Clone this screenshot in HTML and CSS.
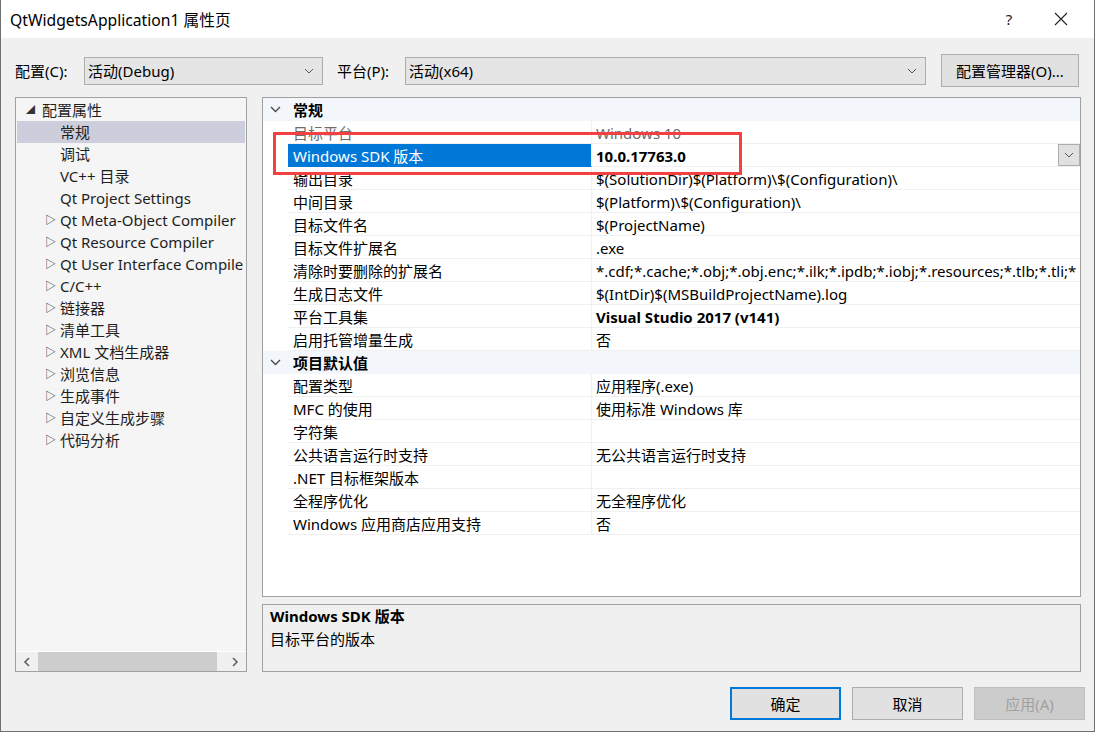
FILE: index.html
```html
<!DOCTYPE html>
<html lang="zh-CN">
<head>
  <meta charset="UTF-8" />
  <title>QtWidgetsApplication1 属性页</title>
  <link rel="stylesheet" href="styles.css">
</head>
<body>
  <div class="window">
    <div class="titlebar">
      <span class="title">QtWidgetsApplication1 属性页</span>
      <span class="tb-btn help">?</span>
      <span class="tb-btn close">
        <svg width="14" height="14" viewBox="0 0 14 14"><path d="M1 1L13 13M13 1L1 13" stroke="#222" stroke-width="1.1" fill="none"/></svg>
      </span>
    </div>

    <div class="toolbar">
      <span class="lbl">配置(C):</span>
      <div class="combo combo-config">
        <span>活动(Debug)</span>
        <svg class="chev" width="10" height="6" viewBox="0 0 10 6"><path d="M1 1L5 5L9 1" stroke="#555" fill="none"/></svg>
      </div>
      <span class="lbl lbl-platform">平台(P):</span>
      <div class="combo combo-platform">
        <span>活动(x64)</span>
        <svg class="chev" width="10" height="6" viewBox="0 0 10 6"><path d="M1 1L5 5L9 1" stroke="#555" fill="none"/></svg>
      </div>
      <button class="btn btn-manager">配置管理器(O)...</button>
    </div>

    <div class="main">
      <div class="tree">
        <div class="tree-list">
          <div class="node root"><span class="exp filled">◢</span>配置属性</div>
          <div class="node child selected">常规</div>
          <div class="node child">调试</div>
          <div class="node child">VC++ 目录</div>
          <div class="node child">Qt Project Settings</div>
          <div class="node child"><span class="exp">▷</span>Qt Meta-Object Compiler</div>
          <div class="node child"><span class="exp">▷</span>Qt Resource Compiler</div>
          <div class="node child"><span class="exp">▷</span>Qt User Interface Compile</div>
          <div class="node child"><span class="exp">▷</span>C/C++</div>
          <div class="node child"><span class="exp">▷</span>链接器</div>
          <div class="node child"><span class="exp">▷</span>清单工具</div>
          <div class="node child"><span class="exp">▷</span>XML 文档生成器</div>
          <div class="node child"><span class="exp">▷</span>浏览信息</div>
          <div class="node child"><span class="exp">▷</span>生成事件</div>
          <div class="node child"><span class="exp">▷</span>自定义生成步骤</div>
          <div class="node child"><span class="exp">▷</span>代码分析</div>
        </div>
        <div class="hscroll">
          <svg class="arrow" width="8" height="10" viewBox="0 0 8 10"><path d="M6 1L2 5L6 9" stroke="#606060" stroke-width="1.6" fill="none"/></svg>
          <div class="track"><div class="thumb"></div></div>
          <svg class="arrow" width="8" height="10" viewBox="0 0 8 10"><path d="M2 1L6 5L2 9" stroke="#606060" stroke-width="1.6" fill="none"/></svg>
        </div>
      </div>

      <div class="right">
        <div class="grid">
          <div class="row cat">
            <span class="gutter"><svg width="11" height="7" viewBox="0 0 11 7"><path d="M1 1L5.5 5.5L10 1" stroke="#444" stroke-width="1.3" fill="none"/></svg></span>
            <span class="name">常规</span>
          </div>
          <div class="row disabled"><span class="gutter"></span><span class="name">目标平台</span><span class="value">Windows 10</span></div>
          <div class="row selected"><span class="gutter"></span><span class="name">Windows SDK 版本</span><span class="value bold">10.0.17763.0</span>
            <span class="dd"><svg width="10" height="6" viewBox="0 0 10 6"><path d="M1 1L5 5L9 1" stroke="#555" fill="none"/></svg></span>
          </div>
          <div class="row"><span class="gutter"></span><span class="name">输出目录</span><span class="value">$(SolutionDir)$(Platform)\$(Configuration)\</span></div>
          <div class="row"><span class="gutter"></span><span class="name">中间目录</span><span class="value">$(Platform)\$(Configuration)\</span></div>
          <div class="row"><span class="gutter"></span><span class="name">目标文件名</span><span class="value">$(ProjectName)</span></div>
          <div class="row"><span class="gutter"></span><span class="name">目标文件扩展名</span><span class="value">.exe</span></div>
          <div class="row"><span class="gutter"></span><span class="name">清除时要删除的扩展名</span><span class="value">*.cdf;*.cache;*.obj;*.obj.enc;*.ilk;*.ipdb;*.iobj;*.resources;*.tlb;*.tli;*</span></div>
          <div class="row"><span class="gutter"></span><span class="name">生成日志文件</span><span class="value">$(IntDir)$(MSBuildProjectName).log</span></div>
          <div class="row"><span class="gutter"></span><span class="name">平台工具集</span><span class="value bold">Visual Studio 2017 (v141)</span></div>
          <div class="row"><span class="gutter"></span><span class="name">启用托管增量生成</span><span class="value">否</span></div>
          <div class="row cat">
            <span class="gutter"><svg width="11" height="7" viewBox="0 0 11 7"><path d="M1 1L5.5 5.5L10 1" stroke="#444" stroke-width="1.3" fill="none"/></svg></span>
            <span class="name">项目默认值</span>
          </div>
          <div class="row"><span class="gutter"></span><span class="name">配置类型</span><span class="value">应用程序(.exe)</span></div>
          <div class="row"><span class="gutter"></span><span class="name">MFC 的使用</span><span class="value">使用标准 Windows 库</span></div>
          <div class="row"><span class="gutter"></span><span class="name">字符集</span><span class="value"></span></div>
          <div class="row"><span class="gutter"></span><span class="name">公共语言运行时支持</span><span class="value">无公共语言运行时支持</span></div>
          <div class="row"><span class="gutter"></span><span class="name">.NET 目标框架版本</span><span class="value"></span></div>
          <div class="row"><span class="gutter"></span><span class="name">全程序优化</span><span class="value">无全程序优化</span></div>
          <div class="row"><span class="gutter"></span><span class="name">Windows 应用商店应用支持</span><span class="value">否</span></div>
          <div class="highlight"></div>
        </div>
        <div class="desc">
          <div class="desc-title">Windows SDK 版本</div>
          <div class="desc-text">目标平台的版本</div>
        </div>
      </div>
    </div>

    <div class="footer">
      <button class="btn btn-ok">确定</button>
      <button class="btn">取消</button>
      <button class="btn btn-disabled">应用(A)</button>
    </div>
  </div>
</body>
</html>
```

FILE: styles.css
```css
* {
  box-sizing: border-box;
}

body {
  margin: 0;
  font-family: "Segoe UI", "Noto Sans", "Noto Sans CJK SC", sans-serif;
  font-size: 15px;
  color: #000;
  background: #f0f0f0;
}

.window {
  width: 1095px;
  height: 732px;
  border: 1px solid #707070;
  border-top: none;
  background: #f0f0f0;
  display: flex;
  flex-direction: column;
  overflow: hidden;
}

.titlebar {
  height: 38px;
  background: #fff;
  display: flex;
  align-items: center;
  padding-left: 9px;
}

.title {
  font-size: 15.7px;
  flex: 1;
  padding-top: 1px;
}

.tb-btn {
  width: 58px;
  display: flex;
  justify-content: center;
  align-items: center;
}

.help {
  font-size: 15px;
  color: #222;
  width: 46px;
}

.close {
  width: 58px;
  margin-right: 4px;
}

.toolbar {
  display: flex;
  align-items: center;
  margin-top: 16px;
  height: 33px;
  padding-left: 14px;
}

.lbl {
  width: 69px;
}

.lbl-platform {
  margin-left: 14px;
  width: 68px;
}

.combo {
  height: 28px;
  background: #e5e5e5;
  border: 1px solid #adadad;
  display: flex;
  align-items: center;
  padding: 0 8px 0 3px;
  justify-content: space-between;
}

.combo-config {
  width: 239px;
}

.combo-platform {
  width: 521px;
}

.btn {
  font-family: inherit;
  font-size: 15px;
  background: #e1e1e1;
  border: 1px solid #adadad;
  color: #000;
  padding: 0;
}

.btn-manager {
  margin-left: 15px;
  width: 138px;
  height: 33px;
}

.main {
  display: flex;
  margin-top: 10px;
  padding-left: 14px;
  height: 576px;
}

.tree {
  width: 232px;
  height: 575px;
  background: #f5f5f5;
  border: 1px solid #a0a0a0;
  display: flex;
  flex-direction: column;
}

.tree-list {
  flex: 1;
  padding: 1px 1px 0;
  overflow: hidden;
}

.node {
  height: 22px;
  line-height: 22px;
  white-space: nowrap;
  position: relative;
  color: #1e1e1e;
}

.node.root {
  padding-left: 25px;
}

.node.child {
  padding-left: 43px;
}

.node.selected {
  background: #cccedb;
}

.exp {
  position: absolute;
  font-size: 10px;
  color: #333;
}

.root .exp {
  left: 9px;
  font-size: 9px;
  top: 0;
}

.child .exp {
  left: 28px;
  font-size: 11px;
  top: 0;
}

.hscroll {
  height: 20px;
  display: flex;
  align-items: center;
  background: #f0f0f0;
  border-top: 1px solid #fff;
}

.arrow {
  margin: 0 7px;
}

.track {
  flex: 1;
  height: 19px;
  padding-right: 2px;
}

.thumb {
  width: 179px;
  height: 100%;
  background: #cdcdcd;
}

.right {
  margin-left: 15px;
  width: 819px;
  display: flex;
  flex-direction: column;
  gap: 7px;
}

.grid {
  height: 500px;
  background: #fff;
  border: 1px solid #a0a0a0;
  position: relative;
  overflow: hidden;
}

.row {
  display: flex;
  height: 23px;
  align-items: stretch;
  position: relative;
  white-space: nowrap;
}

.gutter {
  width: 25px;
  flex: none;
  display: flex;
  align-items: center;
  justify-content: center;
}

.name {
  width: 304px;
  flex: none;
  padding-left: 5px;
  line-height: 24px;
  border-bottom: 1px solid #f0f0f0;
  border-right: 1px solid #f0f0f0;
  overflow: hidden;
}

.value {
  flex: 1;
  padding-left: 4px;
  line-height: 24px;
  border-bottom: 1px solid #f0f0f0;
  overflow: hidden;
}

.bold {
  font-weight: bold;
}

.cat {
  background: #f3f6fb;
}

.cat .name {
  font-weight: bold;
  border: none;
  width: auto;
}

.disabled .name,
.disabled .value {
  color: #6d6d6d;
}

.selected .name {
  background: #0078d7;
  color: #fff;
  border-bottom-color: #0078d7;
}

.dd {
  position: absolute;
  right: 0;
  top: 0;
  width: 22px;
  height: 22px;
  background: #e0e0e0;
  border: 1px solid #adadad;
  display: flex;
  align-items: center;
  justify-content: center;
}

.highlight {
  position: absolute;
  left: 10px;
  top: 34px;
  width: 469px;
  height: 43px;
  border: 3px solid #f34040;
}

.desc {
  height: 68px;
  border: 1px solid #a0a0a0;
  padding: 0 7px;
}

.desc-title {
  font-weight: bold;
  line-height: 22px;
}

.desc-text {
  line-height: 24px;
}

.footer {
  display: flex;
  justify-content: flex-end;
  gap: 11px;
  margin-top: 14px;
  padding-right: 9px;
}

.footer .btn {
  width: 111px;
  height: 33px;
}

.btn-ok {
  border: 2px solid #0078d7;
}

.btn-disabled {
  background: #cccccc;
  border-color: #bfbfbf;
  color: #a0a0a0;
}
```
